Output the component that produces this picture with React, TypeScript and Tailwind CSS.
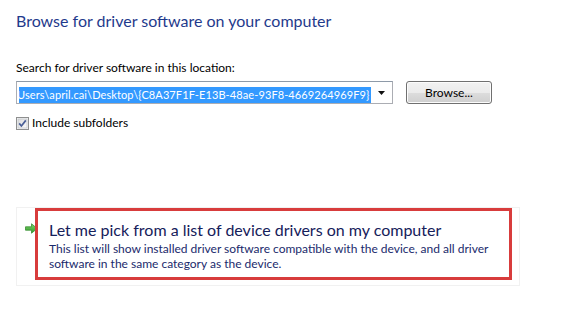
import React from "react";

const font = { fontFamily: 'Lato, "Noto Sans", sans-serif' };

function CheckBox() {
  return (
    <svg width="13" height="13" viewBox="0 0 13 13" className="block shrink-0">
      <defs>
        <linearGradient id="cbg" x1="0" y1="0" x2="1" y2="1">
          <stop offset="0" stopColor="#dcdcdc" />
          <stop offset="1" stopColor="#fbfbfb" />
        </linearGradient>
      </defs>
      <rect x="0.5" y="0.5" width="12" height="12" fill="#f4f4f4" stroke="#8e8f8f" />
      <rect x="2" y="2" width="9" height="9" fill="url(#cbg)" stroke="#b7bcc4" strokeWidth="0.6" />
      <path d="M3.2 6.4 L5.4 9 L9.8 3.4" fill="none" stroke="#4a5f97" strokeWidth="1.7" />
    </svg>
  );
}

function GreenArrow() {
  return (
    <svg width="13" height="11" viewBox="0 0 13 11" className="block">
      <defs>
        <linearGradient id="ga" x1="0" y1="0" x2="0" y2="1">
          <stop offset="0" stopColor="#7fd36a" />
          <stop offset="1" stopColor="#2f9a2b" />
        </linearGradient>
      </defs>
      <path d="M0.5 3.8 H6.5 V0.8 L12.3 5.5 L6.5 10.2 V7.2 H0.5 Z" fill="url(#ga)" stroke="#3a8e34" strokeWidth="0.8" />
    </svg>
  );
}

export default function App() {
  return (
    <div className="w-[570px] h-[324px] bg-white overflow-hidden pl-[16px]" style={font}>
      <div className="pt-[10px] text-[16px] leading-[22px] text-[#1f3a8c]">
        Browse for driver software on your computer
      </div>

      <div className="mt-[28px] text-[12px] leading-[16px] text-black">
        Search for driver software in this location:
      </div>

      <div className="mt-[5px] flex items-center">
        <div className="w-[377px] h-[23px] border border-[#abadb3] border-t-[#8e9aa8] bg-white flex items-center pl-[2px] pr-[4px]">
          <div className="flex-1 min-w-0 overflow-hidden">
            <span className="inline-block bg-[#3399ff] text-white text-[11px] leading-[16px] tracking-[0.1px] whitespace-nowrap -ml-[3px] pl-[1px] pr-[2px]">
              Users\april.cai\Desktop\{"{"}C8A37F1F-E13B-48ae-93F8-4669264969F9{"}"}
            </span>
          </div>
          <div className="w-[14px] flex justify-center shrink-0">
            <svg width="7" height="4" viewBox="0 0 7 4" className="block">
              <path d="M0 0 H7 L3.5 4 Z" fill="#111" />
            </svg>
          </div>
        </div>
        <button
          className="ml-[13px] w-[86px] h-[23px] rounded-[3px] border border-[#707070] text-[12px] leading-[16px] text-black bg-[linear-gradient(#f2f2f2_0%,#ebebeb_50%,#dddddd_50%,#cfcfcf_100%)] shadow-[inset_0_0_0_1px_#fcfcfc]"
          style={font}
        >
          Browse...
        </button>
      </div>

      <div className="mt-[11px] flex items-center gap-[3px] text-[12px] leading-[16px] text-black">
        <CheckBox />
        <span>Include subfolders</span>
      </div>

      <div className="mt-[76px] w-[504px] h-[79px] border border-[#f1f1f1] flex items-start">
        <div className="pl-[8px] pt-[15px] w-[18px] shrink-0">
          <GreenArrow />
        </div>
        <div className="relative z-10 w-[477px] h-[72px] border-[3px] border-[#d83c3c] pl-[11px] pt-[9px]">
          <div className="text-[16px] leading-[19px] text-[#15205a]">
            Let me pick from a list of device drivers on my computer
          </div>
          <div className="mt-[2px] text-[12px] leading-[15px] text-[#1a2a6c]">
            This list will show installed driver software compatible with the device, and all driver
            <br />
            software in the same category as the device.
          </div>
        </div>
      </div>
    </div>
  );
}
